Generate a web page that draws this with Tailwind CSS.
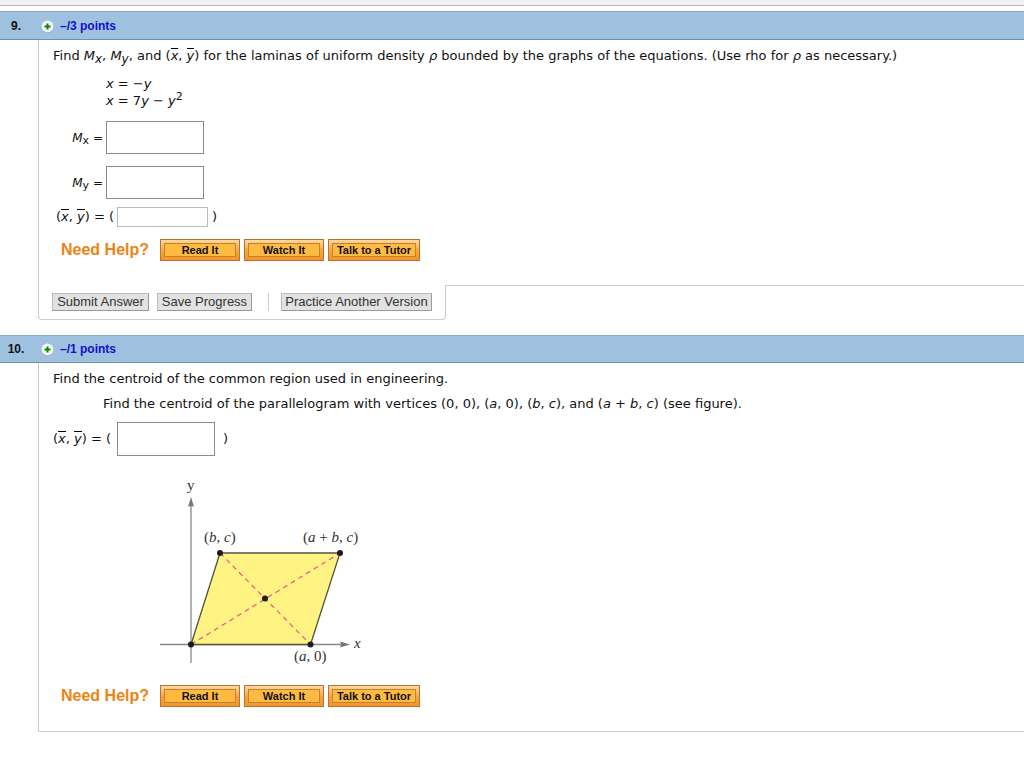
<!DOCTYPE html>
<html lang="en">
<head>
    <meta charset="UTF-8">
    <meta name="viewport" content="width=device-width, initial-scale=1.0">
    <title>Homework</title>
    <script src="https://cdn.jsdelivr.net/npm/@tailwindcss/browser@4"></script>
</head>
<body class="bg-white text-[#111111] text-[13px] leading-4 font-['DejaVu_Sans',Verdana,sans-serif]">
    <div class="h-[6px] bg-[#f2f2f2] border-b border-[#b5b5b5]"></div>

    <main class="pt-[5px]">
        <!-- Question 9 -->
        <section>
            <header class="flex items-center h-[29px] bg-[#9ec1df] border-t border-b border-t-[#8ba9bd] border-b-[#6d92ad] font-['Liberation_Sans',Arial,sans-serif] text-xs font-bold">
                <h2 class="w-8 text-center">9.</h2>
                <a href="#" class="flex items-center ml-2 gap-1 text-[#1111cc]">
                    <svg class="w-4 h-4" viewBox="0 0 16 16" aria-hidden="true">
                        <circle cx="7.5" cy="9" r="6" fill="#7d98ac"/>
                        <circle cx="7.5" cy="8.5" r="6" fill="#f4f4f2"/>
                        <path d="M7.5 5.5v6M4.5 8.5h6" stroke="#078a07" stroke-width="2"/>
                    </svg>
                    –/3 points
                </a>
            </header>

            <div class="ml-[38px] border-l border-[#cccccc] pl-[14px] pt-2 h-[245px]">
                <p class="whitespace-nowrap">Find <i>M<sub class="text-xs">x</sub></i>, <i>M<sub class="text-xs">y</sub></i>, and (<i class="inline-block border-t border-black leading-[14px]">x</i>, <i class="inline-block border-t border-black leading-[14px]">y</i>) for the laminas of uniform density <i>ρ</i> bounded by the graphs of the equations. (Use rho for <i>ρ</i> as necessary.)</p>
                <div class="ml-[53px] mt-[11px] leading-[17px]">
                    <p><i>x</i> = −<i>y</i></p>
                    <p><i>x</i> = 7<i>y</i> − <i>y</i><sup class="text-[11px]">2</sup></p>
                </div>
                <div class="flex items-center mt-3">
                    <label for="mx" class="w-[50px] mr-[3px] text-right text-xs whitespace-nowrap"><i>M</i><sub class="text-[11px]">x</sub> =</label>
                    <input id="mx" type="text" class="w-[98px] h-[33px] border border-[#8c8c8c] px-1">
                </div>
                <div class="flex items-center mt-3">
                    <label for="my" class="w-[50px] mr-[3px] text-right text-xs whitespace-nowrap"><i>M</i><sub class="text-[11px]">y</sub> =</label>
                    <input id="my" type="text" class="w-[98px] h-[33px] border border-[#8c8c8c] px-1">
                </div>
                <div class="flex items-center mt-2 ml-[3px]">
                    <label for="c9" class="w-[61px] whitespace-nowrap">(<i class="inline-block border-t border-black leading-[14px]">x</i>, <i class="inline-block border-t border-black leading-[14px]">y</i>) = (</label>
                    <input id="c9" type="text" class="w-[91px] h-5 border border-[#bbbbbb] px-1">
                    <span class="ml-1">)</span>
                </div>
                <div class="flex items-center mt-3 ml-2 gap-1 font-['Liberation_Sans',Arial,sans-serif] font-bold">
                    <h3 class="w-[95px] text-base leading-5 text-[#ee8311] whitespace-nowrap">Need Help?</h3>
                    <button class="w-20 h-[22px] border border-[#b87333] bg-linear-to-b from-[#ffd9a0] via-[#f9a53c] to-[#f79428] p-[3px] text-[11px]"><span class="block h-[14px] leading-3 border border-[#bd8434] bg-[#ffba42] whitespace-nowrap">Read It</span></button>
                    <button class="w-20 h-[22px] border border-[#b87333] bg-linear-to-b from-[#ffd9a0] via-[#f9a53c] to-[#f79428] p-[3px] text-[11px]"><span class="block h-[14px] leading-3 border border-[#bd8434] bg-[#ffba42] whitespace-nowrap">Watch It</span></button>
                    <button class="w-[92px] h-[22px] border border-[#b87333] bg-linear-to-b from-[#ffd9a0] via-[#f9a53c] to-[#f79428] p-[3px] text-[11px]"><span class="block h-[14px] leading-3 border border-[#bd8434] bg-[#ffba42] whitespace-nowrap">Talk to a Tutor</span></button>
                </div>
            </div>

            <div class="flex ml-[38px]">
                <div class="flex items-center w-[408px] h-[35px] pl-[13px] gap-2 border-l border-r border-b border-[#cccccc] rounded-b text-[13px] text-[#333333] font-['Liberation_Sans',Arial,sans-serif]">
                    <button class="w-[97px] h-[18px] leading-4 border border-[#bbbbbb] border-r-[#999999] border-b-[#999999] bg-[#e2e2e2] whitespace-nowrap">Submit Answer</button>
                    <button class="w-[95px] h-[18px] leading-4 border border-[#bbbbbb] border-r-[#999999] border-b-[#999999] bg-[#e2e2e2] whitespace-nowrap">Save Progress</button>
                    <span class="w-px h-[18px] ml-2 mr-1 bg-[#cccccc]"></span>
                    <button class="w-[151px] h-[18px] leading-4 border border-[#bbbbbb] border-r-[#999999] border-b-[#999999] bg-[#e2e2e2] whitespace-nowrap">Practice Another Version</button>
                </div>
                <div class="flex-1 border-t border-[#cccccc]"></div>
            </div>
        </section>

        <!-- Question 10 -->
        <section class="mt-[15px]">
            <header class="flex items-center h-7 bg-[#9ec1df] border-t border-b border-t-[#8ba9bd] border-b-[#6d92ad] font-['Liberation_Sans',Arial,sans-serif] text-xs font-bold">
                <h2 class="w-8 text-center">10.</h2>
                <a href="#" class="flex items-center ml-2 gap-1 text-[#1111cc]">
                    <svg class="w-4 h-4" viewBox="0 0 16 16" aria-hidden="true">
                        <circle cx="7.5" cy="9" r="6" fill="#7d98ac"/>
                        <circle cx="7.5" cy="8.5" r="6" fill="#f4f4f2"/>
                        <path d="M7.5 5.5v6M4.5 8.5h6" stroke="#078a07" stroke-width="2"/>
                    </svg>
                    –/1 points
                </a>
            </header>

            <div class="ml-[38px] border-l border-b border-[#cccccc] pl-[14px] pt-2 pb-6">
                <p>Find the centroid of the common region used in engineering.</p>
                <p class="ml-[50px] mt-[9px] whitespace-nowrap">Find the centroid of the parallelogram with vertices (0, 0), (<i>a</i>, 0), (<i>b</i>, <i>c</i>), and (<i>a</i> + <i>b</i>, <i>c</i>) (see figure).</p>
                <div class="flex items-center mt-[10px]">
                    <label for="c10" class="w-16 whitespace-nowrap">(<i class="inline-block border-t border-black leading-[14px]">x</i>, <i class="inline-block border-t border-black leading-[14px]">y</i>) = (</label>
                    <input id="c10" type="text" class="w-[98px] h-[34px] border border-[#8c8c8c] px-1">
                    <span class="ml-2">)</span>
                </div>
                <!-- Parallelogram with its diagonals -->
                <svg class="block mt-[14px] ml-[97px] w-[230px] h-[200px] font-['Liberation_Serif',serif] text-[15px]" viewBox="0 0 230 200" fill="#333333">
                    <path d="M41 30V193M10 174.5H192" stroke="#888888" stroke-width="1.3" fill="none"/>
                    <path d="M41 27l3 10q-3-2-6 0zM200 174.5l-10-3q2 3 0 6z" fill="#777777"/>
                    <path d="M41 174.5L70 83H190L160.5 174.5Z" fill="#fff383" stroke="#55533c" stroke-width="1.3"/>
                    <path d="M41 174.5L190 83M70 83L160.5 174.5" stroke="#f0607f" stroke-width="1.3" stroke-dasharray="5 4" fill="none"/>
                    <g fill="#1c1c1c">
                        <circle cx="41" cy="174.5" r="3"/>
                        <circle cx="70" cy="83" r="3"/>
                        <circle cx="190" cy="83" r="3"/>
                        <circle cx="160.5" cy="174.5" r="3"/>
                        <circle cx="115" cy="128.5" r="3"/>
                    </g>
                    <text x="37" y="20">y</text>
                    <text x="54" y="72">(<tspan font-style="italic">b</tspan>, <tspan font-style="italic">c</tspan>)</text>
                    <text x="153" y="72">(<tspan font-style="italic">a</tspan> + <tspan font-style="italic">b</tspan>, <tspan font-style="italic">c</tspan>)</text>
                    <text x="144" y="191">(<tspan font-style="italic">a</tspan>, 0)</text>
                    <text x="204" y="178" font-style="italic">x</text>
                </svg>
                <div class="flex items-center mt-[15px] ml-2 gap-1 font-['Liberation_Sans',Arial,sans-serif] font-bold">
                    <h3 class="w-[95px] text-base leading-5 text-[#ee8311] whitespace-nowrap">Need Help?</h3>
                    <button class="w-20 h-[22px] border border-[#b87333] bg-linear-to-b from-[#ffd9a0] via-[#f9a53c] to-[#f79428] p-[3px] text-[11px]"><span class="block h-[14px] leading-3 border border-[#bd8434] bg-[#ffba42] whitespace-nowrap">Read It</span></button>
                    <button class="w-20 h-[22px] border border-[#b87333] bg-linear-to-b from-[#ffd9a0] via-[#f9a53c] to-[#f79428] p-[3px] text-[11px]"><span class="block h-[14px] leading-3 border border-[#bd8434] bg-[#ffba42] whitespace-nowrap">Watch It</span></button>
                    <button class="w-[92px] h-[22px] border border-[#b87333] bg-linear-to-b from-[#ffd9a0] via-[#f9a53c] to-[#f79428] p-[3px] text-[11px]"><span class="block h-[14px] leading-3 border border-[#bd8434] bg-[#ffba42] whitespace-nowrap">Talk to a Tutor</span></button>
                </div>
            </div>
        </section>
    </main>
</body>
</html>
